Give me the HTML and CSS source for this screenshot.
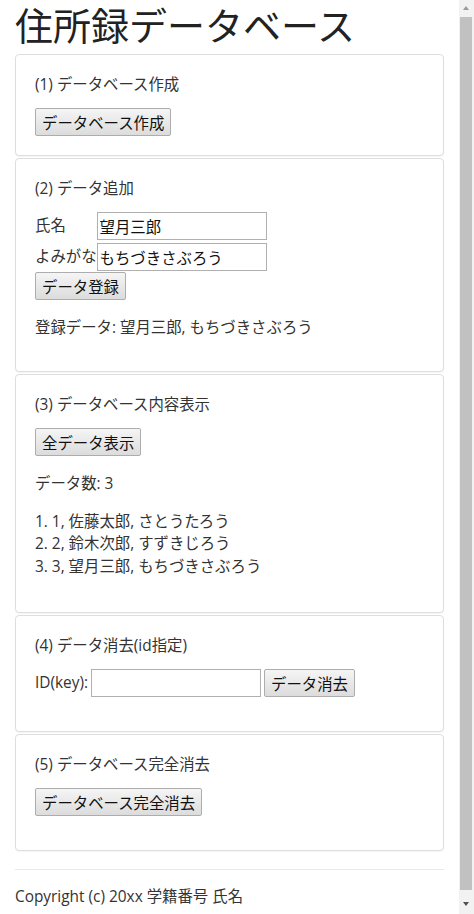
FILE: index.html
```html
<!DOCTYPE html>
<html lang="ja">
<head>
<meta charset="utf-8">
<title>住所録データベース</title>
<link rel="stylesheet" href="styles.css">
</head>
<body>
<div class="page">
  <h1 class="title">住所録データベース</h1>

  <section class="well">
    <p class="heading">(1) データベース作成</p>
    <button class="btn" type="button">データベース作成</button>
  </section>

  <section class="well">
    <p class="heading">(2) データ追加</p>
    <div class="form-grid">
      <label class="lbl">氏名</label><input class="field" type="text" value="望月三郎">
      <label class="lbl">よみがな</label><input class="field" type="text" value="もちづきさぶろう">
    </div>
    <button class="btn" type="button">データ登録</button>
    <p class="result">登録データ: 望月三郎, もちづきさぶろう</p>
  </section>

  <section class="well">
    <p class="heading">(3) データベース内容表示</p>
    <button class="btn" type="button">全データ表示</button>
    <p class="result count">データ数: 3</p>
    <ol class="records">
      <li>1, 佐藤太郎, さとうたろう</li>
      <li>2, 鈴木次郎, すずきじろう</li>
      <li>3, 望月三郎, もちづきさぶろう</li>
    </ol>
  </section>

  <section class="well">
    <p class="heading">(4) データ消去(id指定)</p>
    <div class="inline-row">
      <label class="lbl">ID(key):</label>
      <input class="field" type="text" value="">
      <button class="btn" type="button">データ消去</button>
    </div>
  </section>

  <section class="well">
    <p class="heading">(5) データベース完全消去</p>
    <div class="inline-row">
      <button class="btn" type="button">データベース完全消去</button>
    </div>
  </section>

  <footer class="footer">
    <hr class="rule">
    <p class="copy">Copyright (c) 20xx 学籍番号 氏名</p>
  </footer>
</div>

<div class="scrollbar" aria-hidden="true">
  <div class="sb-arrow sb-up"></div>
  <div class="sb-thumb"></div>
  <div class="sb-arrow sb-down"></div>
</div>
</body>
</html>
```

FILE: styles.css
```css
html {
  overflow: hidden;
}

body {
  margin: 0;
  background: #fff;
  color: #333;
  font-family: "Open Sans", "Noto Sans CJK JP", sans-serif;
  font-size: 15.4px;
  line-height: 22px;
}

.page {
  margin-right: 15px;
  padding: 0 15px;
}

.title {
  margin: -3px 0 3px;
  font-size: 38px;
  line-height: 54px;
  font-weight: 400;
  color: #222;
  font-family: "Noto Sans CJK JP", sans-serif;
}

.well {
  border: 1px solid #dedede;
  border-radius: 4px;
  padding: 19px;
  margin-bottom: 2px;
  box-shadow: 0 1px 1px rgba(0, 0, 0, 0.04);
  background: #fff;
}

.heading {
  margin: 0 0 12px;
}

.btn {
  display: inline-block;
  box-sizing: border-box;
  height: 28px;
  padding: 0 6px;
  margin: 0;
  font-family: "Noto Sans CJK JP", sans-serif;
  font-size: 15.4px;
  line-height: 26px;
  color: #111;
  background: linear-gradient(#f5f5f5, #dcdcdc);
  border: 1px solid #adadad;
  border-radius: 2px;
  vertical-align: top;
}

.form-grid {
  display: grid;
  grid-template-columns: max-content 170px;
  row-gap: 3px;
  align-items: center;
  margin: 1px 0 1px;
}

.lbl {
  color: #333;
}

.field {
  box-sizing: border-box;
  width: 170px;
  height: 28px;
  margin: 0;
  padding: 0 2px;
  border: 1px solid #b0b0b0;
  font-family: "Noto Sans CJK JP", sans-serif;
  font-size: 15.4px;
  color: #111;
  background: #fff;
}

.result {
  margin: 17px 0 13px;
}

.count {
  margin-bottom: 0;
}

.records {
  list-style: decimal inside;
  margin: 15.5px 0 14px;
  padding: 0;
  line-height: 22.8px;
}

.inline-row {
  display: flex;
  align-items: center;
  gap: 3px;
  margin-bottom: 15px;
}

.footer {
  padding-top: 16px;
}

.rule {
  margin: 0;
  border: 0;
  border-top: 1px solid #eaeaea;
}

.copy {
  margin: 16px 0 0;
}

.scrollbar {
  position: fixed;
  top: 0;
  right: 0;
  width: 15px;
  height: 100%;
  background: #f2f2f2;
  display: flex;
  flex-direction: column;
}

.sb-arrow {
  height: 17px;
  flex: none;
  position: relative;
}

.sb-arrow::after {
  content: "";
  position: absolute;
  left: 4px;
  width: 0;
  height: 0;
  border-left: 3.5px solid transparent;
  border-right: 3.5px solid transparent;
}

.sb-up::after {
  top: 6px;
  border-bottom: 4px solid #9a9a9a;
}

.sb-down {
  height: 22px;
}

.sb-down::after {
  top: 10px;
  border-top: 4px solid #505050;
}

.sb-thumb {
  flex: 1;
  margin: 0 2px 2px 1px;
  background: #c1c1c1;
}
```
